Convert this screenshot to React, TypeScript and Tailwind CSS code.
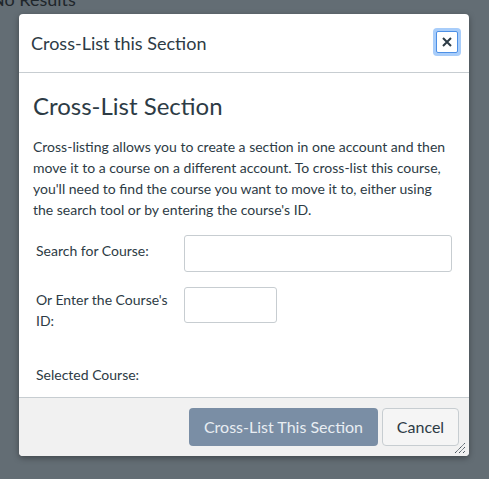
import React from "react";

function ResizeGrip() {
  return (
    <svg
      className="absolute right-[3px] bottom-[2px]"
      width="12"
      height="12"
      viewBox="0 0 12 12"
    >
      <path
        d="M1 11 L11 1 M5 11 L11 5 M9 11 L11 9"
        stroke="#2d3b45"
        strokeWidth="1"
        strokeDasharray="1.2 0.6"
      />
    </svg>
  );
}

export default function App() {
  return (
    <div
      className="relative w-[489px] h-[479px] overflow-hidden bg-[#636d74] text-[#2d3b45]"
      style={{ fontFamily: "Lato, 'Open Sans', sans-serif" }}
    >
      <div className="-mt-[12px] -ml-[9px] text-[18px] leading-[22px] text-[#1f262b]">
        No Results
      </div>

      <div className="ml-[19px] mt-[4px] w-[450px] h-[442px] relative rounded-[4px] bg-white shadow-[0_2px_6px_rgba(0,0,0,0.35)] flex flex-col overflow-hidden">
        <div className="h-[59px] flex items-center justify-between pl-[12px] pr-[8px] border-b border-[#c7cdd1]">
          <span className="text-[18px] leading-[24px]">Cross-List this Section</span>
          <button className="w-[28px] h-[28px] rounded-[4px] bg-[#a8cdfa] p-[3px] flex items-center justify-center -mt-[3px]">
            <span className="w-[22px] h-[22px] bg-white border border-[#4d90e6] rounded-[2px] flex items-center justify-center">
              <svg width="10" height="10" viewBox="0 0 10 10">
                <path d="M1 1 L9 9 M9 1 L1 9" stroke="#2d3b45" strokeWidth="2" />
              </svg>
            </span>
          </button>
        </div>

        <div className="flex-1 px-[14px] pt-[18px]">
          <h2 className="text-[24px] leading-[30px]">Cross-List Section</h2>
          <p className="mt-[15px] text-[14px] leading-[21px]">
            Cross-listing allows you to create a section in one account and then
            move it to a course on a different account. To cross-list this course,
            you'll need to find the course you want to move it to, either using the
            search tool or by entering the course's ID.
          </p>

          <div className="mt-[15px] pl-[3px] grid grid-cols-[148px_1fr] gap-y-[15px] text-[14px] leading-[21px]">
            <label className="pt-[5px]">Search for Course:</label>
            <input className="w-[268px] h-[37px] border border-[#c7cdd1] rounded-[3px] outline-none" />
            <label className="pt-[2px]">
              Or Enter the Course's
              <br />
              ID:
            </label>
            <input className="w-[93px] h-[36px] border border-[#c7cdd1] rounded-[3px] outline-none" />
            <label className="col-span-2 mt-[18px]">Selected Course:</label>
          </div>
        </div>

        <div className="h-[59px] bg-[#f1f1f1] border-t border-[#c7cdd1] flex justify-end items-start gap-[4px] pt-[10px] pr-[10px]">
          <button className="h-[38px] w-[189px] rounded-[4px] bg-[#7a8ea5] text-[#e8edf2] text-[16px]">
            Cross-List This Section
          </button>
          <button className="h-[38px] w-[77px] rounded-[4px] bg-[#f5f5f5] border border-[#c7cdd1] text-[#2d3b45] text-[16px]">
            Cancel
          </button>
        </div>
        <ResizeGrip />
      </div>
    </div>
  );
}
